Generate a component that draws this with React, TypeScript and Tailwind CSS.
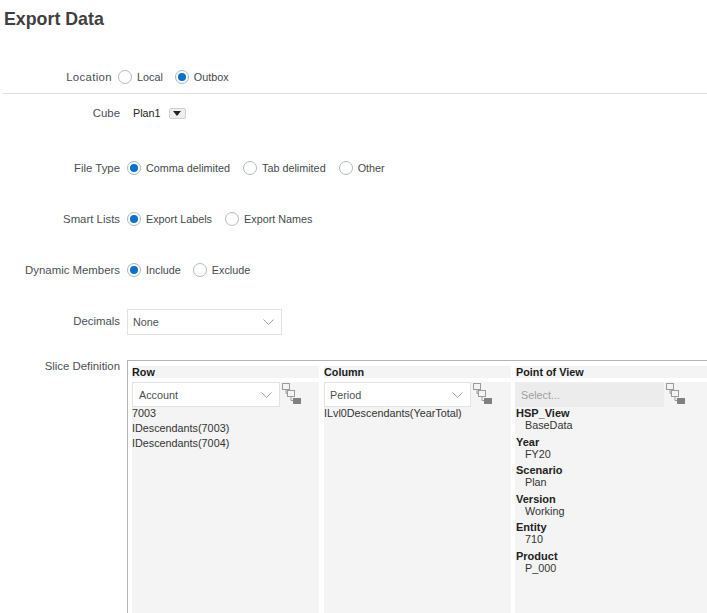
import React from "react";

function Radio({ on, label }: { on?: boolean; label: string }) {
  return (
    <div className="flex items-center gap-[5px]">
      <span className={"flex h-[14px] w-[14px] items-center justify-center rounded-full border bg-white " + (on ? "border-[#aeb4bb]" : "border-[#b4bac0]")}>
        {on && <span className="h-[8px] w-[8px] rounded-full bg-[#0572ce]" />}
      </span>
      <span className="text-[10.8px] text-[#44494d]">{label}</span>
    </div>
  );
}

function FormRow({ label, children, className, labelWidth = "w-[120px]", labelClass = "" }: { label: string; children: React.ReactNode; className?: string; labelWidth?: string; labelClass?: string }) {
  return (
    <div className={"flex items-center " + (className ?? "")}>
      <div className={"shrink-0 text-right text-[11.4px] text-[#4a4f53] " + labelWidth + " " + labelClass}>{label}</div>
      <div className="ml-[7px] flex items-center">{children}</div>
    </div>
  );
}

function Chevron() {
  return (
    <svg width="11" height="6" viewBox="0 0 11 6" fill="none" stroke="#9aa2a9" strokeWidth="1">
      <path d="M0.5 0.5 L5.5 5.5 L10.5 0.5" />
    </svg>
  );
}

function HierIcon() {
  return (
    <svg width="19" height="21" viewBox="0 0 19 21" className="shrink-0">
      <path d="M4 7 V10.5 H6 M9 14 V17.5 H11" fill="none" stroke="#9a9a9a" />
      <rect x="0.5" y="0.5" width="7" height="6" fill="#f4f4f4" stroke="#9a9a9a" />
      <rect x="5.5" y="7.5" width="7" height="6" fill="#f4f4f4" stroke="#9a9a9a" />
      <rect x="11" y="15" width="8" height="6" fill="#808080" />
    </svg>
  );
}

function Column({ title, width, titleClass = "", children }: { title: string; width: string; titleClass?: string; children: React.ReactNode }) {
  return (
    <div className={"flex shrink-0 flex-col " + width}>
      <div className="h-[12px] bg-[#f4f4f4] text-[10.8px] font-bold leading-[12px] text-[#1a1a1a]">
        <span className={"block " + titleClass}>{title}</span>
      </div>
      <div className="mt-[4px] h-[240px] bg-[#f4f4f4] text-[10.8px] text-[#333]">{children}</div>
    </div>
  );
}

function AxisSelect({ value, width, padding }: { value: string; width: string; padding: string }) {
  return (
    <div className="flex items-start">
      <div className={"flex h-[25px] items-center justify-between border border-[#dfe4e8] bg-white pr-[7px] text-[#4a4f53] " + padding + " " + width}>
        <span>{value}</span>
        <Chevron />
      </div>
      <div className="ml-[2px] mt-px"><HierIcon /></div>
    </div>
  );
}

function Pov({ name, value }: { name: string; value: string }) {
  return (
    <div className="mb-[3.6px] leading-[13px]">
      <div className="ml-px text-[11px] font-bold text-[#222]">{name}</div>
      <div className="-mt-px ml-[10px] text-[#333]">{value}</div>
    </div>
  );
}

export default function App() {
  return (
    <div className="h-[613px] w-[707px] overflow-hidden bg-white font-['Liberation_Sans',Arial,sans-serif] text-[12px] leading-[14px]">
      <h1 className="pl-[4px] pt-[9px] text-[17.8px] font-bold leading-[20px] text-[#3f3f3f]">Export Data</h1>
      <FormRow label="Location" className="mt-[40px] h-[16px]" labelWidth="w-[112px]" labelClass="tracking-[0.35px]">
        <div className="-ml-px flex gap-[12px]">
          <Radio label="Local" />
          <Radio on label="Outbox" />
        </div>
      </FormRow>
      <div className="ml-[3px] mt-[8px] h-px bg-[#d9dee3]" />
      <FormRow label="Cube" className="mt-[12px] h-[14px]">
        <div className="flex items-center">
          <span className="ml-[6px] text-[10.8px] text-[#222]">Plan1</span>
          <span className="ml-[8px] flex h-[11px] w-[17px] items-center justify-center rounded-[2px] border border-[#cdd2d6] bg-[#eceef0]">
            <span className="h-0 w-0 border-x-[4px] border-t-[5px] border-x-transparent border-t-[#222]" />
          </span>
        </div>
      </FormRow>
      <FormRow label="File Type" className="mt-[40px] h-[16px]">
        <div className="flex gap-[13px]">
          <Radio on label="Comma delimited" />
          <Radio label="Tab delimited" />
          <Radio label="Other" />
        </div>
      </FormRow>
      <FormRow label="Smart Lists" className="mt-[35px] h-[16px]">
        <div className="flex gap-[13px]">
          <Radio on label="Export Labels" />
          <Radio label="Export Names" />
        </div>
      </FormRow>
      <FormRow label="Dynamic Members" className="mt-[35px] h-[16px]">
        <div className="flex gap-[12px]">
          <Radio on label="Include" />
          <Radio label="Exclude" />
        </div>
      </FormRow>
      <FormRow label="Decimals" className="mt-[31px] h-[26px]" labelClass="-mt-[2px]">
        <div className="flex h-[26px] w-[155px] items-center justify-between border border-[#dfe4e8] bg-white pl-[5px] pr-[7px] text-[10.8px] text-[#4a4f53]">
          <span>None</span>
          <Chevron />
        </div>
      </FormRow>
      <div className="mt-[25px] flex items-start">
        <div className="mt-[-1px] w-[120px] shrink-0 text-right text-[11.4px] text-[#4a4f53]">Slice Definition</div>
        <div className="ml-[7px] flex flex-1 gap-[5px] border border-b-0 border-r-0 border-[#b5b5b5] pl-[4px] pt-[5px]">
          <Column title="Row" width="w-[187px]">
            <AxisSelect value="Account" width="w-[148px]" padding="pl-[6px]" />
            <div className="mt-[-1px] leading-[15px]">
              <div>7003</div>
              <div>IDescendants(7003)</div>
              <div>IDescendants(7004)</div>
            </div>
          </Column>
          <Column title="Column" width="w-[187px]">
            <AxisSelect value="Period" width="w-[147px]" padding="pl-[5px]" />
            <div className="mt-[-1px] leading-[15px]">ILvl0Descendants(YearTotal)</div>
          </Column>
          <Column title="Point of View" width="w-[192px] -ml-px" titleClass="ml-px">
            <div className="flex items-start">
              <div className="flex h-[25px] w-[149px] items-center bg-[#ececec] pl-[6px] text-[#a0a0a0]">Select...</div>
              <div className="ml-[2px] mt-px"><HierIcon /></div>
            </div>
            <div className="mt-0">
              <Pov name="HSP_View" value="BaseData" />
              <Pov name="Year" value="FY20" />
              <Pov name="Scenario" value="Plan" />
              <Pov name="Version" value="Working" />
              <Pov name="Entity" value="710" />
              <Pov name="Product" value="P_000" />
            </div>
          </Column>
        </div>
      </div>
    </div>
  );
}
